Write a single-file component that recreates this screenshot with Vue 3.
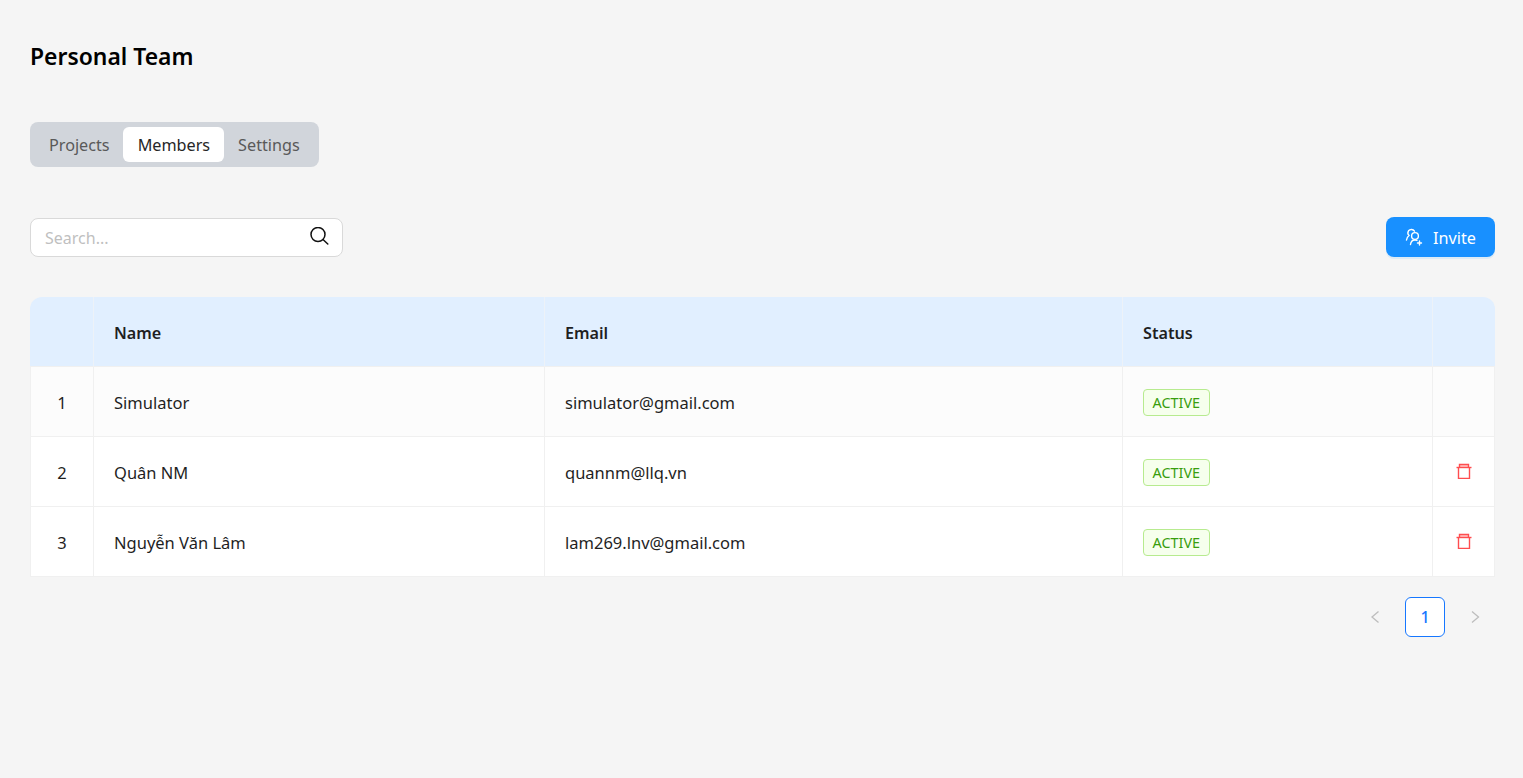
<script setup>
const members = [
  { id: 1, name: 'Simulator', email: 'simulator@gmail.com', removable: false },
  { id: 2, name: 'Quân NM', email: 'quannm@llq.vn', removable: true },
  { id: 3, name: 'Nguyễn Văn Lâm', email: 'lam269.lnv@gmail.com', removable: true },
]
const tabs = ['Projects', 'Members', 'Settings']
</script>

<template>
  <div class="page">
    <h1 class="title">Personal Team</h1>

    <div class="tabs">
      <span v-for="t in tabs" :key="t" class="tab" :class="{ active: t === 'Members' }">{{ t }}</span>
    </div>

    <div class="toolbar">
      <label class="search">
        <input class="search-input" placeholder="Search..." />
        <svg class="search-icon" viewBox="0 0 20 20" width="20" height="20" fill="none" stroke="#111" stroke-width="1.5" stroke-linecap="round">
          <circle cx="9" cy="7.500" r="7" />
          <path d="M14 12.500l4.800 4.500" />
        </svg>
      </label>
      <button class="invite">
        <svg viewBox="0 0 18 18" width="18" height="18" fill="none" stroke="#fff" stroke-width="1.400" stroke-linecap="round">
          <path d="M9.500 3.200A3.800 3.800 0 0 0 3.500 2.800C2.500 4.300 2.900 6.300 4 7.500 2.700 8.500 1.800 10 1.500 12" />
          <circle cx="10" cy="8" r="3.400" />
          <path d="M5.500 16.500C5.800 14 7.500 12 10 12c.8 0 1.500.2 2 .5" />
          <path d="M14.500 13v4M12.500 15h4" />
        </svg>
        <span>Invite</span>
      </button>
    </div>

    <div class="table-wrap">
      <table class="table">
        <colgroup>
          <col class="c1" /><col class="c2" /><col class="c3" /><col class="c4" /><col />
        </colgroup>
        <thead>
          <tr>
            <th></th><th>Name</th><th>Email</th><th>Status</th><th></th>
          </tr>
        </thead>
        <tbody>
          <tr v-for="m in members" :key="m.id">
            <td class="num">{{ m.id }}</td>
            <td>{{ m.name }}</td>
            <td>{{ m.email }}</td>
            <td><span class="tag">ACTIVE</span></td>
            <td class="act">
              <svg v-if="m.removable" viewBox="0 0 16 16" width="16" height="16" fill="none" stroke="#ff4d4f" stroke-width="1.400">
                <path d="M3.500 4.500V1.500h9v3" fill="#ffc9c9" />
                <path d="M.5 4.500h15" />
                <path d="M2.500 4.500v11h11v-11" />
              </svg>
            </td>
          </tr>
        </tbody>
      </table>
    </div>

    <div class="pager">
      <svg class="arrow" viewBox="0 0 10 14" width="10" height="14" fill="none" stroke="#bdbdbd" stroke-width="1.300"><path d="M8.500 1.500L2 7l6.500 5.500" /></svg>
      <span class="page-num">1</span>
      <svg class="arrow" viewBox="0 0 10 14" width="10" height="14" fill="none" stroke="#bdbdbd" stroke-width="1.300"><path d="M2 1.500L8.500 7 2 12.500" /></svg>
    </div>
  </div>
</template>

<style>
html, body { margin: 0; background: #f5f5f5; }
</style>

<style scoped>
.page {
  box-sizing: border-box;
  min-height: 778px;
  padding: 38px 28px 0 30px;
  background: #f5f5f5;
  font-family: "Noto Sans", "Open Sans", sans-serif;
  font-size: 16.500px;
  color: #1f1f1f;
}
.title {
  margin: 0 0 48px;
  height: 36px;
  line-height: 38px;
  font-size: 22.900px;
  font-weight: 600;
  color: #000;
}
.tabs {
  display: inline-flex;
  box-sizing: border-box;
  height: 45px;
  padding: 5px;
  background: #d1d5db;
  border-radius: 8px;
}
.tab {
  height: 34px;
  padding: 1px 14px 0;
  line-height: 35px;
  font-size: 16.200px;
  color: #595959;
  border-radius: 6px;
}
.tab:first-child { padding-right: 13px; }
.tab.active { padding-left: 15px; background: #fff; color: #262626; }
.toolbar {
  display: flex;
  justify-content: space-between;
  align-items: center;
  margin-top: 50px;
  height: 40px;
}
.search {
  box-sizing: border-box;
  display: flex;
  align-items: center;
  width: 313px;
  height: 39px;
  padding: 0 13px 0 14px;
  background: #fff;
  border: 1px solid #d9d9d9;
  border-radius: 8px;
}
.search-input {
  flex: 1;
  min-width: 0;
  border: 0;
  outline: 0;
  padding: 2px 0 0;
  font: inherit;
  font-size: 16px;
  background: transparent;
}
.search-input::placeholder { color: #bfbfbf; }
.invite {
  display: flex;
  align-items: center;
  gap: 10px;
  box-sizing: border-box;
  width: 109px;
  height: 40px;
  padding: 0 0 0 19px;
  border: 0;
  border-radius: 8px;
  background: #1890ff;
  color: #fff;
  font: inherit;
  font-size: 16.200px;
  box-shadow: 0 2px 0 rgba(5, 145, 255, 0.1);
}
.invite span { padding-top: 2px; }
.table-wrap { margin-top: 40px; }
.table {
  width: 100%;
  table-layout: fixed;
  border-collapse: separate;
  border-spacing: 0;
}
.c1 { width: 64px; }
.c2 { width: 451px; }
.c3 { width: 578px; }
.c4 { width: 310px; }
th, td {
  box-sizing: border-box;
  height: 70px;
  padding: 2px 20px 0;
  text-align: left;
  border-right: 1px solid #f0f0f0;
  border-bottom: 1px solid #f0f0f0;
}
th {
  background: #e1efff;
  font-size: 16.200px;
  font-weight: 600;
  color: #1f1f1f;
  border-right-color: #edf2f8;
}
th:first-child { border-top-left-radius: 12px; }
th:last-child { border-top-right-radius: 12px; border-right: 0; }
td { background: #fff; }
td:first-child { border-left: 1px solid #f0f0f0; }
tbody tr:first-child td { background: #fcfcfc; }
.num { text-align: center; padding: 2px 0 0; }
.tag {
  display: inline-block;
  box-sizing: border-box;
  height: 27px;
  line-height: 25px;
  padding: 0 8.500px;
  font-size: 14.400px;
  color: #389e0d;
  background: #f6ffed;
  border: 1px solid #b7eb8f;
  border-radius: 4px;
}
.act { padding: 2px 0 0; text-align: center; }
.act svg { display: block; margin: 0 auto; position: relative; top: -2px; }
.pager {
  display: flex;
  justify-content: flex-end;
  align-items: center;
  gap: 25px;
  margin-top: 20px;
  padding-right: 15px;
}
.page-num {
  box-sizing: border-box;
  width: 40px;
  height: 40px;
  line-height: 38px;
  text-align: center;
  border: 1px solid #1677ff;
  border-radius: 6px;
  color: #1677ff;
  background: #fff;
  font-size: 16px;
  font-weight: 500;
}
</style>
